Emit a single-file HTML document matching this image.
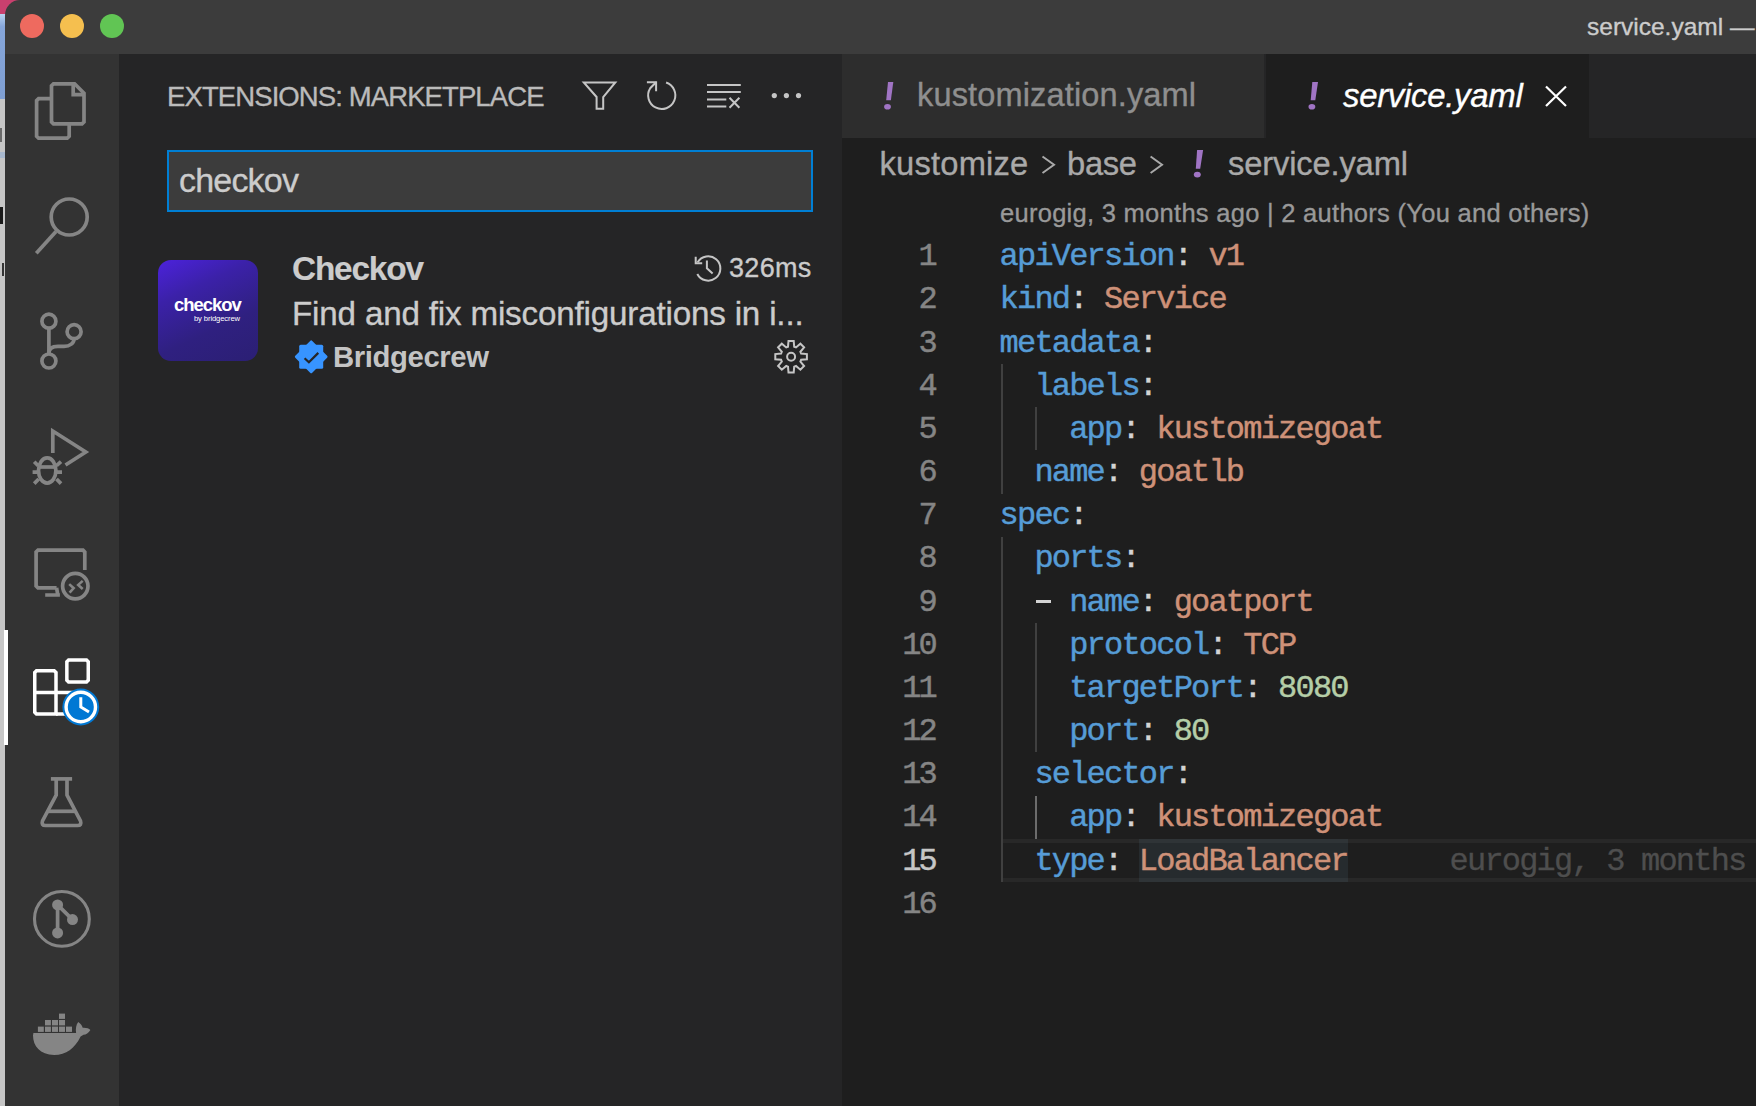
<!DOCTYPE html>
<html><head><meta charset="utf-8">
<style>
*{margin:0;padding:0;box-sizing:border-box}
html,body{width:1756px;height:1106px;overflow:hidden;background:#3c3c3c}
body{position:relative;font-family:"Liberation Sans",sans-serif}
.a{position:absolute}
.t{position:absolute;white-space:pre;line-height:1;-webkit-text-stroke:0.35px currentColor}
.code{position:absolute;left:999.6px;-webkit-text-stroke:0.45px currentColor;font-family:"Liberation Mono",monospace;font-size:32px;letter-spacing:-1.8px;line-height:43.17px;height:43.17px;white-space:pre;color:#d4d4d4}
.ln{position:absolute;left:875px;-webkit-text-stroke:0.45px currentColor;width:60px;text-align:right;font-family:"Liberation Mono",monospace;font-size:32px;letter-spacing:-2.8px;line-height:43.17px;white-space:pre;color:#858585}
.k{color:#569cd6}.s{color:#ce9178}.n{color:#b5cea8}
.guide{position:absolute;width:2px;background:#404040}
</style></head><body>
<!-- desktop strip -->
<div class="a" style="left:0;top:0;width:30px;height:14px;background:#c9406e"></div>
<div class="a" style="left:0;top:14px;width:6px;height:85px;background:linear-gradient(#b9d3f0,#86a6da 15%,#7f9fd2)"></div>
<div class="a" style="left:0;top:99px;width:6px;height:1007px;background:#c6c6c6"></div>
<div class="a" style="left:0;top:128px;width:2px;height:14px;background:#6a6a6a"></div>
<div class="a" style="left:0;top:152px;width:5px;height:6px;background:#a9b9cf"></div>
<div class="a" style="left:0;top:207px;width:3px;height:17px;background:#1a1a1a"></div>
<div class="a" style="left:2px;top:263px;width:2px;height:13px;background:#333"></div>
<!-- window -->
<div class="a" style="left:5px;top:0;width:1751px;height:1106px;background:#3c3c3c;border-top-left-radius:15px;overflow:hidden">
</div>
<!-- activity bar -->
<div class="a" style="left:5px;top:54px;width:114px;height:1052px;background:#333333"></div>
<div class="a" style="left:4px;top:630px;width:4px;height:115px;background:#ffffff"></div>
<!-- sidebar -->
<div class="a" style="left:119px;top:54px;width:723px;height:1052px;background:#252526"></div>
<!-- tabs bar -->
<div class="a" style="left:842px;top:54px;width:914px;height:84px;background:#252526"></div>
<div class="a" style="left:842px;top:54px;width:422px;height:84px;background:#2d2d2d"></div>
<div class="a" style="left:1266px;top:54px;width:323px;height:84px;background:#1e1e1e"></div>
<!-- editor -->
<div class="a" style="left:842px;top:138px;width:914px;height:968px;background:#1e1e1e"></div>

<!-- title -->
<div class="t" style="left:1587px;top:14.7px;font-size:24.5px;color:#cccccc">service.yaml —</div>

<!-- sidebar title -->
<div class="t" style="left:167px;top:83px;font-size:27.5px;letter-spacing:-0.9px;color:#bbbbbb">EXTENSIONS: MARKETPLACE</div>
<!-- search box -->
<div class="a" style="left:167px;top:150px;width:646px;height:62px;background:#3c3c3c;border:2px solid #007fd4"></div>
<div class="t" style="left:179px;top:162.5px;font-size:34px;letter-spacing:-0.8px;color:#cccccc">checkov</div>

<!-- extension item -->
<div class="a" style="left:158px;top:260px;width:100px;height:101px;border-radius:13px;background:linear-gradient(155deg,#4c22dc 0%,#3b21a8 30%,#2f2080 65%,#2b1f74 100%)"></div>
<div class="t" style="left:174px;top:295.9px;font-size:18.5px;font-weight:bold;letter-spacing:-1.05px;color:#ffffff;-webkit-text-stroke:0">checkov</div>
<div class="t" style="left:194px;top:314.7px;font-size:7.6px;letter-spacing:-0.1px;color:#ffffff;-webkit-text-stroke:0">by bridgecrew</div>

<div class="t" style="left:292px;top:252px;font-size:33.4px;font-weight:bold;letter-spacing:-1.2px;color:#cccccc;-webkit-text-stroke:0.15px #cccccc">Checkov</div>
<div class="t" style="left:729px;top:255.2px;font-size:27px;letter-spacing:0.3px;color:#cccccc">326ms</div>
<div class="t" style="left:292px;top:297px;font-size:33.2px;letter-spacing:-0.18px;color:#cccccc">Find and fix misconfigurations in i...</div>
<div class="t" style="left:333px;top:342.2px;font-size:29.3px;font-weight:bold;letter-spacing:-0.4px;color:#c4c4c4;-webkit-text-stroke:0">Bridgecrew</div>

<!-- tabs text -->
<div class="t" style="left:917px;top:78.7px;font-size:32.6px;letter-spacing:0.12px;color:#8f8f8f">kustomization.yaml</div>
<div class="t" style="left:1343px;top:79.2px;font-size:33px;font-style:italic;letter-spacing:-0.33px;color:#ffffff">service.yaml</div>

<!-- breadcrumbs -->
<div class="t" style="left:879.5px;top:148.4px;font-size:32.7px;letter-spacing:0.2px;color:#a9a9a9">kustomize</div>
<div class="t" style="left:1067px;top:148.4px;font-size:32.7px;letter-spacing:-0.3px;color:#a9a9a9">base</div>
<div class="t" style="left:1228px;top:148.4px;font-size:32.7px;letter-spacing:-0.15px;color:#a9a9a9">service.yaml</div>

<!-- blame header -->
<div class="t" style="left:1000px;top:200.5px;font-size:25.5px;letter-spacing:0.28px;color:#999999">eurogig, 3 months ago | 2 authors (You and others)</div>

<!-- line highlight -->
<div class="a" style="left:1003px;top:839px;width:753px;height:43px;border-top:4px solid #282828;border-bottom:4px solid #282828"></div>
<div class="a" style="left:1139px;top:839px;width:209px;height:43px;background:#262b2e"></div>
<div class="a" style="left:1139px;top:839px;width:209px;height:4px;background:#2f3437"></div>
<div class="a" style="left:1139px;top:878px;width:209px;height:4px;background:#2f3437"></div>

<!-- indent guides -->
<div class="guide" style="left:1001px;top:364px;height:130px"></div>
<div class="guide" style="left:1001px;top:537px;height:345px"></div>
<div class="guide" style="left:1035px;top:407px;height:43px"></div>
<div class="guide" style="left:1035px;top:623px;height:129px"></div>
<div class="guide" style="left:1035px;top:796px;height:43px;background:#6c6c6c"></div>

<!-- line numbers -->
<div class="ln" style="top:235.2px">1
2
3
4
5
6
7
8
9
10
11
12
13
14
<span style="color:#c6c6c6">15</span>
16</div>

<!-- code -->
<div class="code" style="top:235.20px"><span class="k">apiVersion</span>: <span class="s">v1</span></div>
<div class="code" style="top:278.37px"><span class="k">kind</span>: <span class="s">Service</span></div>
<div class="code" style="top:321.54px"><span class="k">metadata</span>:</div>
<div class="code" style="top:364.71px">  <span class="k">labels</span>:</div>
<div class="code" style="top:407.88px">    <span class="k">app</span>: <span class="s">kustomizegoat</span></div>
<div class="code" style="top:451.05px">  <span class="k">name</span>: <span class="s">goatlb</span></div>
<div class="code" style="top:494.22px"><span class="k">spec</span>:</div>
<div class="code" style="top:537.39px">  <span class="k">ports</span>:</div>
<div class="code" style="top:580.56px">    <span class="k">name</span>: <span class="s">goatport</span></div>
<div class="code" style="top:623.73px">    <span class="k">protocol</span>: <span class="s">TCP</span></div>
<div class="code" style="top:666.90px">    <span class="k">targetPort</span>: <span class="n">8080</span></div>
<div class="code" style="top:710.07px">    <span class="k">port</span>: <span class="n">80</span></div>
<div class="code" style="top:753.24px">  <span class="k">selector</span>:</div>
<div class="code" style="top:796.41px">    <span class="k">app</span>: <span class="s">kustomizegoat</span></div>
<div class="code" style="top:839.58px">  <span class="k">type</span>: <span class="s">LoadBalancer</span></div>
<div class="code" style="top:839.58px;left:1449.6px;color:#4e4e4e;-webkit-text-stroke:0.3px #4e4e4e">eurogig, 3 months ago</div>

<div class="a" style="left:1036px;top:600px;width:15px;height:3px;background:#d4d4d4"></div>
<!-- ICONS -->
<svg class="a" style="left:0;top:0" width="1756" height="1106" viewBox="0 0 1756 1106">
<!-- traffic lights -->
<circle cx="32" cy="26" r="12" fill="#ee6a5f"/>
<circle cx="72" cy="26" r="12" fill="#f5bf4f"/>
<circle cx="112" cy="26" r="12" fill="#61c554"/>

<g fill="none" stroke="#858585" stroke-width="3.7" stroke-linejoin="miter">
<!-- files -->
<path d="M53.5 83.8 L74.6 83.8 L84 93.2 L84 122 L82 123.9 L53.5 123.9 L51.5 121.9 L51.5 85.8 Z"/>
<path d="M73.2 84 L73.2 94.6 L84 94.6"/>
<path d="M51.5 98.6 L38.6 98.6 L36.6 100.6 L36.6 136.2 L38.6 138.2 L67.2 138.2 L69.2 136.2 L69.2 123.9"/>
<!-- search -->
<circle cx="69.2" cy="217" r="18"/>
<path d="M56 231.5 L36.3 253.2"/>
<!-- scm -->
<circle cx="48.9" cy="321.2" r="7"/>
<circle cx="48.9" cy="361" r="7"/>
<circle cx="74.1" cy="331.7" r="7"/>
<path d="M48.9 328.2 L48.9 354"/>
<path d="M48.9 353 C48.9 348, 53 346.4, 58 346.4 L64 346.4 C70 346.4, 74.1 343, 74.1 338.7"/>
<!-- debug -->
<path d="M52.8 453 L52.8 431 L85.8 452 L65.5 465"/>
<ellipse cx="47.2" cy="470.5" rx="8.7" ry="12.6"/>
<path d="M38.5 467 L56 467"/>
<path d="M32.6 472.2 L37.5 472.2 M57 472.2 L62 472.2 M34.2 461.7 L38.2 465.7 M61 461.7 L56.5 465.7 M34.2 483.6 L38.7 479 M61 483.6 L56.5 479"/>
<!-- remote -->
<path d="M84.8 570 L84.8 552 L83 550.2 L38 550.2 L36.1 552 L36.1 586 L38 587.9 L56.6 587.9"/>
<path d="M45.2 595 L59.9 595 M56.6 587.9 L57.8 595"/>
<circle cx="75.3" cy="586.1" r="12.7"/>
<path d="M69.2 584.1 L73.7 588.2 L69.6 592.7 M82.7 580.9 L78.2 584.9 L82.7 589" stroke-width="2.6"/>
<!-- flask -->
<path d="M50.9 778.9 L72.1 778.9"/>
<path d="M56.2 779 L56.2 795 L42.5 821 Q41 825.5 45.5 825.5 L77.5 825.5 Q82 825.5 80.5 821 L67 795 L67 779"/>
<path d="M47 811.3 L76 811.3"/>
<!-- gitlens -->
<circle cx="61.9" cy="918.9" r="27.4" stroke-width="3.1"/>
<path d="M57.6 904.9 L57.6 932.9 M57.6 904.9 L72.5 919.6"/>
</g>
<g fill="#858585">
<circle cx="57.6" cy="904.9" r="5.5"/>
<circle cx="57.6" cy="932.9" r="5.5"/>
<circle cx="72.5" cy="919.6" r="5.5"/>
<!-- docker -->
<rect x="37.9" y="1026.6" width="5.9" height="5.3"/>
<rect x="45" y="1026.6" width="5.9" height="5.3"/>
<rect x="52" y="1026.6" width="6" height="5.3"/>
<rect x="59" y="1026.6" width="6" height="5.3"/>
<rect x="66" y="1026.6" width="6" height="5.3"/>
<rect x="45" y="1020" width="5.9" height="5.4"/>
<rect x="52" y="1020" width="6" height="5.4"/>
<rect x="59" y="1020" width="6" height="5.4"/>
<rect x="59" y="1013.6" width="6" height="5.3"/>
<path d="M33.4 1033 L76.1 1033 C75.5 1029, 76 1025, 78.2 1022.1 C80.5 1023.5, 82 1025.5, 82.7 1027.8 C86 1027.5, 89 1028.5, 90.4 1029.9 C88.5 1033, 86 1034.5, 83.5 1034.8 L80.6 1036.4 C75 1048, 66 1055, 54.2 1055 C40 1055, 33 1046, 33 1035.6 Z"/>
</g>
<!-- extensions active -->
<g fill="none" stroke="#ffffff" stroke-width="3.5">
<path d="M36.5 670.75 L54.2 670.75 L56 672.5 L56 714 L36.5 714 L34.75 712.2 L34.75 672.5 Z"/>
<path d="M34.75 692.5 L76 692.5 M56 714 L76 714"/>
<path d="M68.6 659.95 L86.5 659.95 L88.25 661.7 L88.25 680.2 L86.5 682 L68.6 682 L66.85 680.2 L66.85 661.7 Z"/>
</g>
<circle cx="80.8" cy="707" r="18.4" fill="#0078d4"/>
<circle cx="80.8" cy="707" r="14.7" fill="none" stroke="#ffffff" stroke-width="3.4"/>
<path d="M80.8 697.3 L80.8 707 L89 712" fill="none" stroke="#ffffff" stroke-width="3"/>

<!-- sidebar header icons -->
<g fill="none" stroke="#c5c5c5" stroke-width="2">
<path d="M583.8 82.4 L615.3 82.4 L603.2 97 L603.2 108.8 L596.6 108.8 L596.6 97 Z"/>
<path d="M666.1 82.5 A13.6 13.6 0 1 1 650.2 88.2 L656.1 82.2"/>
<path d="M646.9 82.2 L656.1 82.2 L656.1 91.2"/>
<path d="M707 84.9 H740.8 M707 92 H740.8 M707 99.5 H726.3 M707 106.6 H726.3 M729.5 97.7 L739.4 107.7 M739.4 97.7 L729.5 107.7"/>
<!-- history -->
<path d="M697.6 262.3 A12.2 12.2 0 1 1 697.3 274"/>
<path d="M695.7 256.8 L695.7 263.3 L702.2 263.3"/>
<path d="M706.9 260.4 L706.9 268.2 L712.6 273.6"/>
<!-- gear -->
<path d="M788.0 346.7 L788.5 340.9 L793.7 340.9 L794.2 346.7 L796.0 347.4 L800.4 343.7 L804.1 347.4 L800.4 351.8 L801.1 353.6 L806.9 354.1 L806.9 359.3 L801.1 359.8 L800.4 361.6 L804.1 366.0 L800.4 369.7 L796.0 366.0 L794.2 366.7 L793.7 372.5 L788.5 372.5 L788.0 366.7 L786.2 366.0 L781.8 369.7 L778.1 366.0 L781.8 361.6 L781.1 359.8 L775.3 359.3 L775.3 354.1 L781.1 353.6 L781.8 351.8 L778.1 347.4 L781.8 343.7 L786.2 347.4 Z"/>
<circle cx="791.1" cy="356.7" r="4"/>
</g>
<g fill="#c5c5c5">
<circle cx="774.3" cy="95.6" r="2.6"/>
<circle cx="786.4" cy="95.6" r="2.6"/>
<circle cx="798.5" cy="95.6" r="2.6"/>
</g>
<!-- verified badge -->
<g fill="#3794ff">
<rect x="299.2" y="344.8" width="24" height="24" rx="1.5"/>
<rect x="299.2" y="344.8" width="24" height="24" rx="1.5" transform="rotate(45 311.2 356.8)"/>
</g>
<path d="M304.6 358.2 L308.9 362.3 L318.3 352.9" fill="none" stroke="#252526" stroke-width="2.2"/>

<!-- yaml ! icons -->
<g fill="#a074c4">
<path d="M888 82 L893.3 82 L890.9 100.3 L886.2 100.3 Z"/>
<ellipse cx="887.5" cy="106.8" rx="3.4" ry="2.8"/>
<path d="M1312.3 82 L1318 82 L1315.3 100.3 L1310.7 100.3 Z"/>
<ellipse cx="1311.9" cy="106.8" rx="3.4" ry="2.8"/>
<path d="M1197.1 150.1 L1203.1 150.1 L1200.2 168.7 L1195.8 168.7 Z"/>
<ellipse cx="1197.3" cy="174.6" rx="3.5" ry="2.9"/>
</g>
<!-- tab close -->
<path d="M1546 86.5 L1566 106 M1566 86.5 L1546 106" stroke="#ffffff" stroke-width="2.2" fill="none"/>
<!-- breadcrumb chevrons -->
<path d="M1042.5 156.5 L1054 164.8 L1042.5 173 M1150.6 156.5 L1162 164.8 L1150.6 173" stroke="#a9a9a9" stroke-width="2" fill="none"/>
</svg>
</body></html>
